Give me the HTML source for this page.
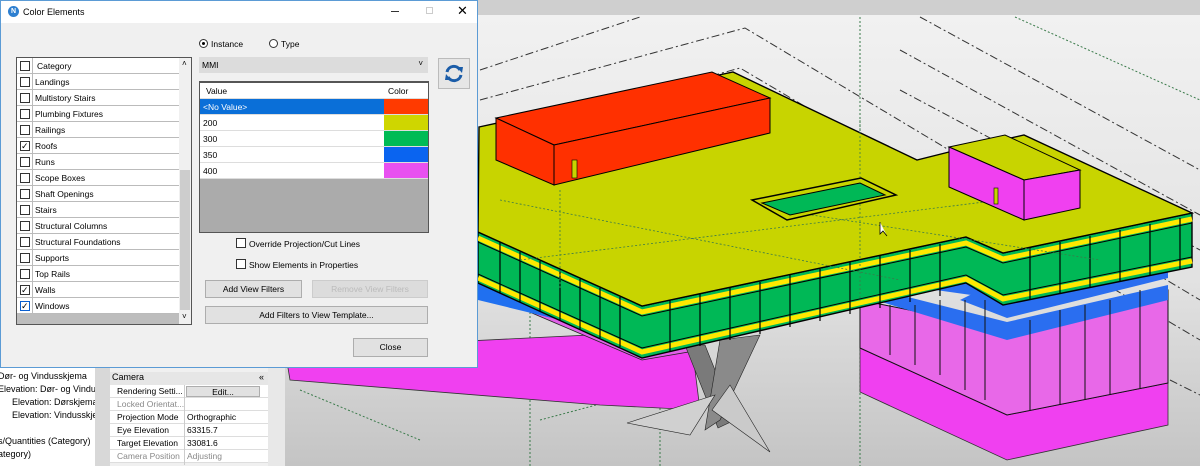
<!DOCTYPE html>
<html><head><meta charset="utf-8"><style>
*{margin:0;padding:0;box-sizing:border-box}
body{width:1200px;height:466px;overflow:hidden;position:relative;font-family:"Liberation Sans",sans-serif;font-size:8.5px;color:#000;background:#d0d0d0}
.abs{position:absolute}
.dlg{left:0;top:0;width:478px;height:368px;background:#f0f0f0;border:1px solid #5b9bd5}
.title{left:0;top:0;width:476px;height:22px;background:#fff}
.cb{position:absolute;width:10px;height:10px;border:1px solid #333;background:#fff}
.row{position:absolute;left:0;width:162px;height:16px;border-bottom:1px solid #bbb;background:#fff}
.row span{position:absolute;left:18px;top:3px}
.row .cb{left:3px;top:3px}
.btn{position:absolute;background:#e1e1e1;border:1px solid #adadad;text-align:center;line-height:17px;font-size:8.5px}
.tr{position:absolute;left:0;width:228px;height:16px;border-bottom:1px solid #ddd;background:#fff}
.tr span{position:absolute;left:3px;top:3px}
.tr i{position:absolute;left:184px;top:0;width:44px;height:15px}
.pr{position:absolute;left:0;width:158px;height:13px;border-bottom:1px solid #ddd;background:#fff;font-size:8.5px}
.pr b{font-weight:normal;position:absolute;left:7px;top:1px}
.pr em{font-style:normal;position:absolute;left:77px;top:1px}
</style></head><body>
<svg class="abs" style="left:0;top:0" width="1200" height="466" viewBox="0 0 1200 466">
<defs><linearGradient id="bg" x1="0" y1="0" x2="0" y2="1"><stop offset="0" stop-color="#f2f2f2"/><stop offset="0.6" stop-color="#e2e2e2"/><stop offset="1" stop-color="#c4c4c4"/></linearGradient></defs>
<rect x="0" y="0" width="1200" height="466" fill="url(#bg)"/>
<rect x="0" y="0" width="1200" height="15" fill="#cfcfcf"/>
<g stroke="#333" stroke-width="1" stroke-dasharray="8,3,2,3" fill="none">
<path d="M480 70 L640 17"/><path d="M480 100 L745 28 L1200 300"/><path d="M480 140 L740 68 L1200 340"/><path d="M920 17 L1200 170"/><path d="M900 50 L1200 215"/><path d="M900 90 L1200 250"/><path d="M1170 380 L1200 395"/>
</g>
<g stroke="#3a7a4a" stroke-width="1" stroke-dasharray="2,2" fill="none">
<path d="M1015 17 L1200 100"/><path d="M860 17 L860 466"/><path d="M660 240 L660 466"/><path d="M530 200 L530 466"/><path d="M540 420 L690 380"/><path d="M300 390 L420 440"/>
</g>
<polygon points="285,350 690,330 700,410 600,405 290,380" fill="#f040f0" stroke="#333" stroke-width="0.8"/>
<polygon points="478,290 642,360 700,350 700,330 478,260" fill="#e060e8" stroke="#222" stroke-width="0.8"/>
<polygon points="478,275 560,300 560,320 478,300" fill="#2070f0"/>
<polygon points="685,345 705,345 735,420 718,428" fill="#7a7a7a" stroke="#222" stroke-width="0.6"/>
<polygon points="720,340 760,335 720,420 705,430" fill="#8a8a8a" stroke="#222" stroke-width="0.6"/>
<polygon points="627,423 715,395 690,435" fill="#d0d0d0" stroke="#222" stroke-width="0.6"/>
<polygon points="712,410 770,452 730,385" fill="#cacaca" stroke="#222" stroke-width="0.6"/>
<polygon points="860,348 1007,415 1168,383 1168,425 1007,460 860,392" fill="#f040f0" stroke="#333" stroke-width="0.8"/>
<polygon points="860,300 1007,330 1168,290 1168,383 1007,415 860,348" fill="#e868e8" stroke="#111" stroke-width="1"/>
<polygon points="875,300 1007,340 1168,300 1168,285 1007,322 880,290" fill="#2a6ef0"/>
<polygon points="980,290 1007,300 1168,262 1168,278 1007,318 960,300" fill="#2a6ef0"/>
<polygon points="900,285 1007,300 1100,280 1000,260" fill="#2a6ef0"/>
<g stroke="#111" stroke-width="1"><path d="M890 305V355M915 305V365M940 300V375M965 300V390M985 300V400M1030 320V410M1060 310V405M1085 305V400M1110 300V395M1140 290V388"/></g>
<polygon points="478,232 642,306 966,237 1003,253 1192,213 1192,267 1003,305 966,283 642,358 478,283" fill="#00b856" stroke="#000" stroke-width="1.4"/>
<polyline points="478,238 642,312 966,243 1003,259 1192,219" fill="none" stroke="#ffe800" stroke-width="5"/>
<polyline points="478,278 642,352 966,279 1003,299 1192,261" fill="none" stroke="#ffe800" stroke-width="5"/>
<polyline points="478,242 642,316 966,247 1003,263 1192,223" fill="none" stroke="#000" stroke-width="1"/>
<polyline points="478,274 642,348 966,275 1003,295 1192,257" fill="none" stroke="#000" stroke-width="1"/>
<g stroke="#000" stroke-width="1.2"><path d="M500 242V293M520 252V302M540 261V311M560 270V320M580 279V329M600 288V338M620 297V347M670 300V352M700 294V346M730 288V340M760 282V334M790 275V327M820 269V321M850 262V314M880 256V308M910 250V302M940 244V296M1030 248V300M1060 242V294M1090 236V288M1120 230V282M1150 224V276M1180 218V270"/></g>
<polygon points="479,127 733,72 917,160 949,152 1024,135 1192,213 1003,253 966,237 642,306 478,232" fill="#c8d400" stroke="#000" stroke-width="1.4"/>
<g stroke="#3a7a4a" stroke-width="0.8" stroke-dasharray="2,2" fill="none"><path d="M560 190 L560 290"/><path d="M500 200 L900 280"/><path d="M520 260 L1000 200"/><path d="M860 120 L860 300"/><path d="M780 210 L1100 260"/></g>
<polygon points="496,118 712,72 770,98 554,145" fill="#ff3000" stroke="#000" stroke-width="1"/>
<polygon points="496,118 554,145 554,185 496,160" fill="#ff3000" stroke="#000" stroke-width="1"/>
<polygon points="554,145 770,98 770,133 554,185" fill="#ff3000" stroke="#000" stroke-width="1"/>
<rect x="572" y="160" width="5" height="18" fill="#c8d400" stroke="#000" stroke-width="0.6"/>
<polygon points="949,147 1005,135 1080,170 1024,180" fill="#c8d400" stroke="#000" stroke-width="1"/>
<polygon points="949,147 1024,180 1024,220 949,187" fill="#f040f0" stroke="#000" stroke-width="1"/>
<polygon points="1024,180 1080,170 1080,208 1024,220" fill="#f040f0" stroke="#000" stroke-width="1"/>
<rect x="994" y="188" width="4" height="16" fill="#c8d400" stroke="#000" stroke-width="0.6"/>
<polygon points="752,200 861,178 896,195 787,220" fill="#c8d400" stroke="#000" stroke-width="1.5"/>
<polygon points="762,203 860,183 885,195 790,215" fill="#00b856" stroke="#000" stroke-width="1"/>
<path d="M880 222 l0 12 l3 -3 l4 5" stroke="#000" fill="#fff" stroke-width="0.8"/>
</svg>

<div class="abs" style="left:0;top:368px;width:95px;height:98px;background:#fff;font-size:9px;line-height:13px;overflow:hidden">
<div style="position:absolute;left:-2px;top:2px;white-space:nowrap">Dør- og Vindusskjema</div>
<div style="position:absolute;left:-2px;top:15px;white-space:nowrap">Elevation: Dør- og Vindus</div>
<div style="position:absolute;left:12px;top:28px;white-space:nowrap">Elevation: Dørskjema</div>
<div style="position:absolute;left:12px;top:41px;white-space:nowrap">Elevation: Vindusskjer</div>
<div style="position:absolute;left:-2px;top:67px;white-space:nowrap">s/Quantities (Category)</div>
<div style="position:absolute;left:-2px;top:80px;white-space:nowrap">ategory)</div>
</div>
<div class="abs" style="left:95px;top:368px;width:15px;height:98px;background:#d8d8d8"></div>
<div class="abs" style="left:110px;top:368px;width:158px;height:98px;background:#f0f0f0;overflow:hidden">
<div class="abs" style="left:0;top:4px;width:158px;height:13px;background:#e6e6e6;font-size:9px;padding-left:2px">Camera<span style="position:absolute;right:4px">«</span></div>
<div class="pr" style="top:17px"><b>Rendering Setti...</b><div class="btn" style="left:76px;top:1px;width:74px;height:11px;line-height:10px">Edit...</div></div>
<div class="pr" style="top:30px;color:#888"><b>Locked Orientat...</b></div>
<div class="pr" style="top:43px"><b>Projection Mode</b><em>Orthographic</em></div>
<div class="pr" style="top:56px"><b>Eye Elevation</b><em>63315.7</em></div>
<div class="pr" style="top:69px"><b>Target Elevation</b><em>33081.6</em></div>
<div class="pr" style="top:82px;color:#888"><b>Camera Position</b><em>Adjusting</em></div>
<div class="abs" style="left:74px;top:17px;width:1px;height:80px;background:#ccc"></div>
</div>
<div class="abs" style="left:268px;top:368px;width:17px;height:98px;background:#e8e8e8"></div>

<div class="abs dlg">
<div class="abs title"></div>
<div class="abs" style="left:7px;top:5px;width:11px;height:11px;border-radius:50%;background:#2d7fd0;color:#fff;font-size:7px;font-weight:bold;text-align:center;line-height:11px">N</div>
<div class="abs" style="left:22px;top:6px;font-size:9px">Color Elements</div>
<div class="abs" style="left:390px;top:10px;width:8px;height:1px;background:#333"></div>
<div class="abs" style="left:425px;top:6px;width:7px;height:7px;border:1px solid #ccc"></div>
<div class="abs" style="left:456px;top:2px;font-size:13px">✕</div>

<div class="abs" style="left:198px;top:38px;width:9px;height:9px;border:1px solid #333;border-radius:50%;background:#fff"><div style="position:absolute;left:2px;top:2px;width:3px;height:3px;border-radius:50%;background:#000"></div></div>
<div class="abs" style="left:210px;top:38px">Instance</div>
<div class="abs" style="left:268px;top:38px;width:9px;height:9px;border:1px solid #333;border-radius:50%;background:#fff"></div>
<div class="abs" style="left:280px;top:38px">Type</div>

<div class="abs" style="left:15px;top:56px;width:176px;height:268px;border:1px solid #555;background:#bdbdbd">
<div class="abs" style="left:162px;top:0;width:12px;height:266px;background:#f0f0f0"></div>
<div class="abs" style="left:163px;top:112px;width:10px;height:140px;background:#cdcdcd"></div>
<div class="abs" style="left:165px;top:1px;font-size:8px">˄</div>
<div class="abs" style="left:165px;top:254px;font-size:8px">˅</div>
<div class="row" style="top:0;background:#fff"><span style="left:20px">Category</span><i class="cb" style="left:3px;top:3px"></i></div>
<div class="row" style="top:16px"><i class="cb"></i><span>Landings</span></div>
<div class="row" style="top:32px"><i class="cb"></i><span>Multistory Stairs</span></div>
<div class="row" style="top:48px"><i class="cb"></i><span>Plumbing Fixtures</span></div>
<div class="row" style="top:64px"><i class="cb"></i><span>Railings</span></div>
<div class="row" style="top:80px"><i class="cb" style="font-size:9px;line-height:8px;font-style:normal">✓</i><span>Roofs</span></div>
<div class="row" style="top:96px"><i class="cb"></i><span>Runs</span></div>
<div class="row" style="top:112px"><i class="cb"></i><span>Scope Boxes</span></div>
<div class="row" style="top:128px"><i class="cb"></i><span>Shaft Openings</span></div>
<div class="row" style="top:144px"><i class="cb"></i><span>Stairs</span></div>
<div class="row" style="top:160px"><i class="cb"></i><span>Structural Columns</span></div>
<div class="row" style="top:176px"><i class="cb"></i><span>Structural Foundations</span></div>
<div class="row" style="top:192px"><i class="cb"></i><span>Supports</span></div>
<div class="row" style="top:208px"><i class="cb"></i><span>Top Rails</span></div>
<div class="row" style="top:224px"><i class="cb" style="font-size:9px;line-height:8px;font-style:normal">✓</i><span>Walls</span></div>
<div class="row" style="top:240px"><i class="cb" style="font-size:9px;line-height:8px;font-style:normal;border-color:#0a5fd0">✓</i><span>Windows</span></div>
<div class="abs" style="left:15px;top:0;width:1px;height:256px;background:#bbb"></div>
</div>

<div class="abs" style="left:198px;top:56px;width:229px;height:16px;background:#dcdcdc;padding:3px 3px">MMI<span style="position:absolute;right:5px;top:2px;font-size:8px">˅</span></div>
<div class="abs" style="left:437px;top:57px;width:32px;height:31px;background:#e6e6e6;border:1px solid #bbb">
<svg width="30" height="29" viewBox="0 0 30 29"><g fill="none" stroke="#1a5ca8" stroke-width="3"><path d="M8 13 A7 7 0 0 1 21 11"/><path d="M22 16 A7 7 0 0 1 9 18"/></g><polygon points="18,8 24,8 23,14" fill="#1a5ca8"/><polygon points="12,21 6,21 7,15" fill="#1a5ca8"/></svg>
</div>

<div class="abs" style="left:198px;top:80px;width:230px;height:152px;border:1px solid #555;border-top:2px solid #555;background:#ababab">
<div class="tr" style="top:0"><span style="left:6px">Value</span><span style="left:188px">Color</span></div>
<div class="tr" style="top:16px;background:#0a6fd8;color:#fff"><span>&lt;No Value&gt;</span><i style="background:#ff3a00"></i></div>
<div class="tr" style="top:32px"><span>200</span><i style="background:#cfd600"></i></div>
<div class="tr" style="top:48px"><span>300</span><i style="background:#00bb55"></i></div>
<div class="tr" style="top:64px"><span>350</span><i style="background:#0a64f0"></i></div>
<div class="tr" style="top:80px"><span>400</span><i style="background:#e850f0"></i></div>
</div>

<i class="cb" style="left:235px;top:237px"></i><div class="abs" style="left:248px;top:238px">Override Projection/Cut Lines</div>
<i class="cb" style="left:235px;top:258px"></i><div class="abs" style="left:248px;top:259px">Show Elements in Properties</div>
<div class="btn" style="left:204px;top:279px;width:97px;height:18px">Add View Filters</div>
<div class="btn" style="left:311px;top:279px;width:116px;height:18px;color:#bbb;border-color:#ccc;background:#dcdcdc">Remove View Filters</div>
<div class="btn" style="left:204px;top:305px;width:223px;height:18px">Add Filters to View Template...</div>
<div class="btn" style="left:352px;top:337px;width:75px;height:19px">Close</div>
</div>
</body></html>
